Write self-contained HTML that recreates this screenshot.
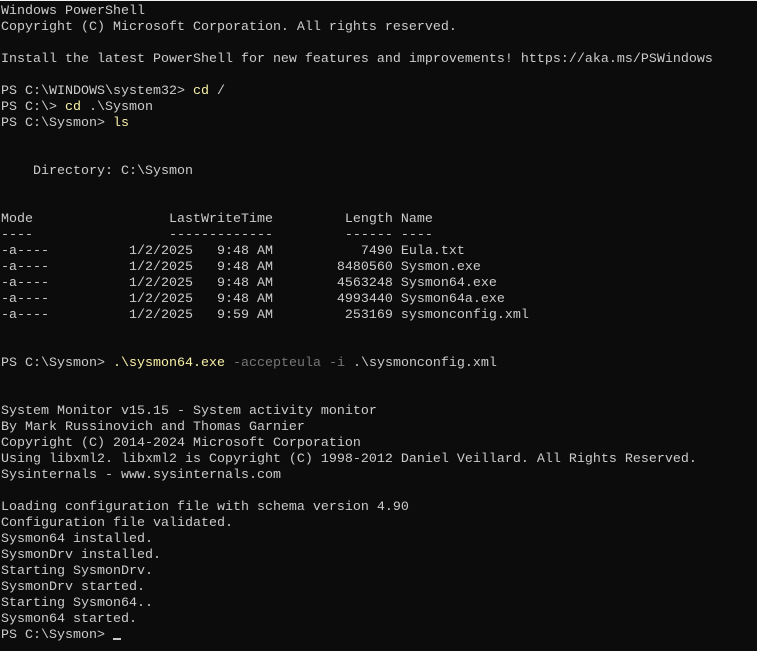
<!DOCTYPE html>
<html><head><meta charset="utf-8"><style>
html,body{margin:0;padding:0;}
body{width:757px;height:651px;background:#0c0c0c;overflow:hidden;border-top:1px solid #f0f0f0;box-sizing:border-box;}
pre{margin:0;padding:3px 0 0 1px;font-family:"Liberation Mono",monospace;font-size:13.33px;line-height:16px;color:#cccccc;white-space:pre;}
.y{color:#f9f1a5}.g{color:#767676}
.c{display:inline-block;width:8px;height:2px;background:#cccccc;vertical-align:-2px;}
</style></head><body><pre>Windows PowerShell
Copyright (C) Microsoft Corporation. All rights reserved.

Install the latest PowerShell for new features and improvements! https://aka.ms/PSWindows

PS C:\WINDOWS\system32&gt; <span class="y">cd</span> /
PS C:\&gt; <span class="y">cd</span> .\Sysmon
PS C:\Sysmon&gt; <span class="y">ls</span>


    Directory: C:\Sysmon


Mode                 LastWriteTime         Length Name
----                 -------------         ------ ----
-a----          1/2/2025   9:48 AM           7490 Eula.txt
-a----          1/2/2025   9:48 AM        8480560 Sysmon.exe
-a----          1/2/2025   9:48 AM        4563248 Sysmon64.exe
-a----          1/2/2025   9:48 AM        4993440 Sysmon64a.exe
-a----          1/2/2025   9:59 AM         253169 sysmonconfig.xml


PS C:\Sysmon&gt; <span class="y">.\sysmon64.exe</span> <span class="g">-accepteula</span> <span class="g">-i</span> .\sysmonconfig.xml


System Monitor v15.15 - System activity monitor
By Mark Russinovich and Thomas Garnier
Copyright (C) 2014-2024 Microsoft Corporation
Using libxml2. libxml2 is Copyright (C) 1998-2012 Daniel Veillard. All Rights Reserved.
Sysinternals - www.sysinternals.com

Loading configuration file with schema version 4.90
Configuration file validated.
Sysmon64 installed.
SysmonDrv installed.
Starting SysmonDrv.
SysmonDrv started.
Starting Sysmon64..
Sysmon64 started.
PS C:\Sysmon&gt; <span class="c"></span></pre></body></html>
